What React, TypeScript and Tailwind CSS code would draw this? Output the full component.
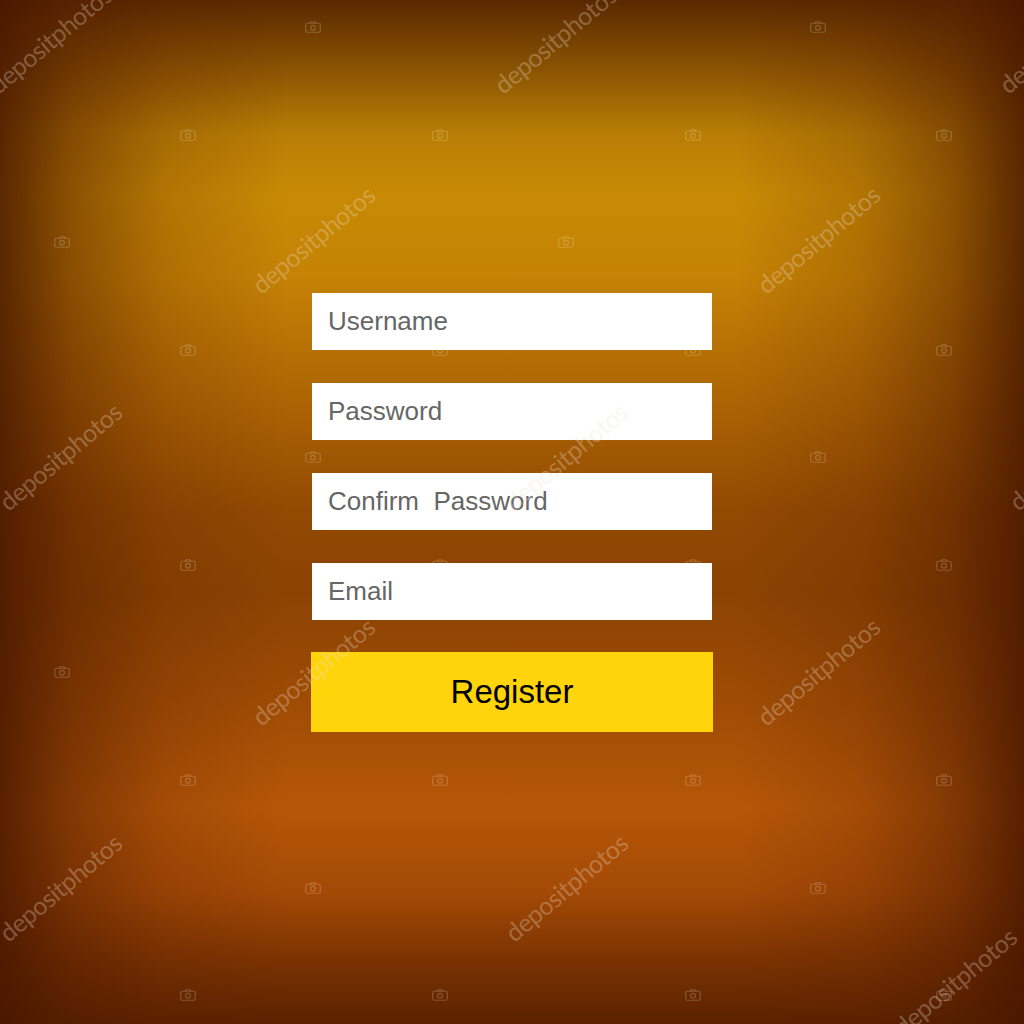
import React from "react";

const rowTypes: number[][] = [
  [313, 818],
  [188, 440, 693, 944],
  [62, 566],
  [188, 440, 693, 944],
];
const rowYs = [27, 135, 242, 350, 457, 565, 672, 780, 888, 995];

const cams: { x: number; y: number }[] = [];
rowYs.forEach((y, i) => {
  rowTypes[i % 4].forEach((x) => cams.push({ x, y }));
});

const marks: { x: number; y: number }[] = [
  { x: 50, y: 40 },
  { x: 555, y: 40 },
  { x: 1060, y: 40 },
  { x: 313, y: 240 },
  { x: 818, y: 240 },
  { x: 60, y: 457 },
  { x: 566, y: 457 },
  { x: 1070, y: 457 },
  { x: 313, y: 672 },
  { x: 818, y: 672 },
  { x: 60, y: 888 },
  { x: 566, y: 888 },
  { x: 955, y: 982 },
];

function Camera() {
  return (
    <svg width="16" height="12" viewBox="0 0 16 12" fill="none">
      <rect x="0.75" y="2.25" width="14.5" height="9" rx="1.5" stroke="rgba(255,255,255,0.2)" strokeWidth="1.2" />
      <path d="M5 2.25 L6 0.75 H10 L11 2.25" stroke="rgba(255,255,255,0.2)" strokeWidth="1.2" />
      <circle cx="8" cy="6.75" r="2.4" stroke="rgba(255,255,255,0.2)" strokeWidth="1.2" />
    </svg>
  );
}

const fields = ["Username", "Password", "Confirm  Password", "Email"];

export default function App() {
  return (
    <div className="relative w-[1024px] h-[1024px] overflow-hidden bg-[linear-gradient(180deg,#5a2800_0%,#8c5503_7%,#b87d05_13%,#c88a05_19%,#c58205_27%,#ad6404_39%,#924902_50%,#8c4302_58%,#a04c05_69%,#b65708_79%,#a44a06_87%,#7a3202_94%,#5a2200_100%)]">
      <div className="absolute inset-0 bg-[linear-gradient(90deg,rgba(72,22,0,0.85)_0%,rgba(80,26,0,0.5)_7%,rgba(90,30,0,0.2)_16%,rgba(90,30,0,0)_28%,rgba(90,30,0,0)_72%,rgba(90,30,0,0.2)_84%,rgba(80,26,0,0.5)_93%,rgba(72,22,0,0.85)_100%)]" />

      {cams.map((c, i) => (
        <div key={"c" + i} className="absolute" style={{ left: c.x - 8, top: c.y - 6 }}>
          <Camera />
        </div>
      ))}

      <div className="relative flex flex-col items-center pt-[293px]">
        <div className="flex flex-col gap-[33px] w-[400px]">
          {fields.map((f) => (
            <div
              key={f}
              className="h-[57px] bg-white flex items-center pl-[16px] whitespace-pre text-[26px] text-[#666666] font-['Liberation_Sans',Arial,sans-serif]"
            >
              {f}
            </div>
          ))}
        </div>
        <button className="mt-[32px] w-[402px] h-[80px] bg-[#ffd40b] flex items-center justify-center text-[33px] text-black font-['Liberation_Sans',Arial,sans-serif]">
          Register
        </button>
      </div>

      {marks.map((m, i) => (
        <div
          key={"m" + i}
          className="absolute w-0 h-0 flex items-center justify-center pointer-events-none"
          style={{ left: m.x, top: m.y }}
        >
          <span className="whitespace-nowrap -rotate-[40deg] text-[25px] tracking-[-0.5px] text-[rgba(235,225,215,0.3)] font-['Lato','Liberation_Sans',sans-serif]">
            depositphotos
          </span>
        </div>
      ))}
    </div>
  );
}
